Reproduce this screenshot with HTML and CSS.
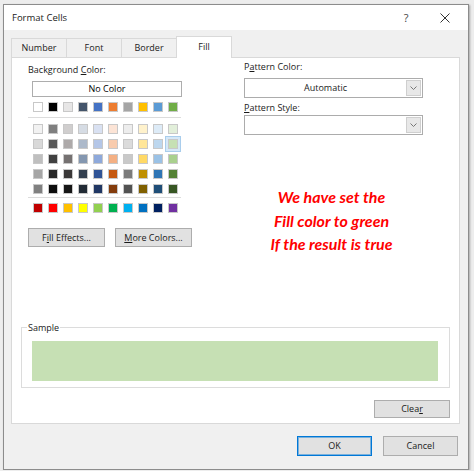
FILE: index.html
```html
<!DOCTYPE html>
<html>
<head>
<meta charset="utf-8">
<link rel="stylesheet" href="styles.css">
</head>
<body>
<div class="dialog">
  <div class="titlebar">
    <span class="title">Format Cells</span>
    <span class="help">?</span>
    <svg class="close" width="10" height="10" viewBox="0 0 10 10"><path d="M0.5 0.5L9.5 9.5M9.5 0.5L0.5 9.5" stroke="#333" stroke-width="1" fill="none"/></svg>
  </div>
  <div class="body">
    <div class="tabs">
      <div class="tab">Number</div>
      <div class="tab">Font</div>
      <div class="tab">Border</div>
      <div class="tab active">Fill</div>
    </div>
    <div class="panel">
      <div class="top">
        <div class="left">
          <div class="label">Background <u>C</u>olor:</div>
          <div class="nocolor">No Color</div>
          <div class="swatches">
            <span class="sw" style="background:#FFFFFF"></span><span class="sw" style="background:#000000"></span><span class="sw" style="background:#E7E6E6"></span><span class="sw" style="background:#44546A"></span><span class="sw" style="background:#4472C4"></span><span class="sw" style="background:#ED7D31"></span><span class="sw" style="background:#A5A5A5"></span><span class="sw" style="background:#FFC000"></span><span class="sw" style="background:#5B9BD5"></span><span class="sw" style="background:#70AD47"></span>
          </div>
          <div class="sep"></div>
          <div class="swatches grid">
            <span class="sw" style="background:#F2F2F2"></span><span class="sw" style="background:#7F7F7F"></span><span class="sw" style="background:#D0CECE"></span><span class="sw" style="background:#D6DCE4"></span><span class="sw" style="background:#D9E1F2"></span><span class="sw" style="background:#FCE4D6"></span><span class="sw" style="background:#EDEDED"></span><span class="sw" style="background:#FFF2CC"></span><span class="sw" style="background:#DDEBF7"></span><span class="sw" style="background:#E2EFDA"></span>
            <span class="sw" style="background:#D9D9D9"></span><span class="sw" style="background:#595959"></span><span class="sw" style="background:#AEAAAA"></span><span class="sw" style="background:#ACB9CA"></span><span class="sw" style="background:#B4C6E7"></span><span class="sw" style="background:#F8CBAD"></span><span class="sw" style="background:#DBDBDB"></span><span class="sw" style="background:#FFE699"></span><span class="sw" style="background:#BDD7EE"></span><span class="sw sel" style="background:#C6E0B4"></span>
            <span class="sw" style="background:#BFBFBF"></span><span class="sw" style="background:#404040"></span><span class="sw" style="background:#757171"></span><span class="sw" style="background:#8497B0"></span><span class="sw" style="background:#8EA9DB"></span><span class="sw" style="background:#F4B084"></span><span class="sw" style="background:#C9C9C9"></span><span class="sw" style="background:#FFD966"></span><span class="sw" style="background:#9BC2E6"></span><span class="sw" style="background:#A9D08E"></span>
            <span class="sw" style="background:#A6A6A6"></span><span class="sw" style="background:#262626"></span><span class="sw" style="background:#3A3838"></span><span class="sw" style="background:#333F4F"></span><span class="sw" style="background:#305496"></span><span class="sw" style="background:#C65911"></span><span class="sw" style="background:#7B7B7B"></span><span class="sw" style="background:#BF8F00"></span><span class="sw" style="background:#2F75B5"></span><span class="sw" style="background:#548235"></span>
            <span class="sw" style="background:#808080"></span><span class="sw" style="background:#0D0D0D"></span><span class="sw" style="background:#161616"></span><span class="sw" style="background:#222B35"></span><span class="sw" style="background:#203764"></span><span class="sw" style="background:#833C0C"></span><span class="sw" style="background:#525252"></span><span class="sw" style="background:#806000"></span><span class="sw" style="background:#1F4E78"></span><span class="sw" style="background:#375623"></span>
          </div>
          <div class="sep sep2"></div>
          <div class="swatches">
            <span class="sw" style="background:#C00000"></span><span class="sw" style="background:#FF0000"></span><span class="sw" style="background:#FFC000"></span><span class="sw" style="background:#FFFF00"></span><span class="sw" style="background:#92D050"></span><span class="sw" style="background:#00B050"></span><span class="sw" style="background:#00B0F0"></span><span class="sw" style="background:#0070C0"></span><span class="sw" style="background:#002060"></span><span class="sw" style="background:#7030A0"></span>
          </div>
          <div class="btnrow">
            <button class="btn wide">F<u>i</u>ll Effects...</button>
            <button class="btn wide"><u>M</u>ore Colors...</button>
          </div>
        </div>
        <div class="right">
          <div class="label">P<u>a</u>ttern Color:</div>
          <div class="select first">
            <span class="select-text">Automatic</span>
            <span class="select-btn"><svg width="7" height="4" viewBox="0 0 7 4"><path d="M0.5 0.5L3.5 3.5L6.5 0.5" fill="none" stroke="#777" stroke-width="1"/></svg></span>
          </div>
          <div class="label label2"><u>P</u>attern Style:</div>
          <div class="select">
            <span class="select-text"></span>
            <span class="select-btn"><svg width="7" height="4" viewBox="0 0 7 4"><path d="M0.5 0.5L3.5 3.5L6.5 0.5" fill="none" stroke="#777" stroke-width="1"/></svg></span>
          </div>
          <div class="note">We have set the<br>Fill color to green<br>If the result is true</div>
        </div>
      </div>
      <div class="sample">
        <div class="sample-label">Sample</div>
        <div class="sample-fill"></div>
      </div>
      <div class="clearrow">
        <button class="btn clear">Clea<u>r</u></button>
      </div>
    </div>
    <div class="footer">
      <button class="btn foot ok">OK</button>
      <button class="btn foot">Cancel</button>
    </div>
  </div>
</div>
</body>
</html>
```
FILE: styles.css
```css
html, body {
  margin: 0;
  padding: 0;
}
body {
  background: #ededed;
  padding: 4px 0 0 3px;
  font-family: "Open Sans", "Noto Sans", sans-serif;
  font-size: 9px;
  color: #000;
}
.dialog {
  width: 466px;
  height: 466px;
  box-sizing: border-box;
  border: 1px solid #8c8c8c;
  box-shadow: 1px 1px 2px rgba(0,0,0,0.3);
  display: flex;
  flex-direction: column;
  background: #f0f0f0;
}
.titlebar {
  height: 25px;
  flex: none;
  background: #fff;
  display: flex;
  align-items: center;
  padding-left: 8px;
}
.title {
  font-size: 9.5px;
  color: #1a1a1a;
}
.help {
  margin-left: auto;
  width: 10px;
  text-align: center;
  font-size: 11px;
  color: #444;
}
.close {
  margin-left: 29px;
  margin-right: 18px;
  display: block;
}
.body {
  flex: 1;
  padding: 6px 0 0 7px;
  display: flex;
  flex-direction: column;
}
.tabs {
  display: flex;
  align-items: flex-end;
  height: 21px;
}
.tab {
  width: 56px;
  height: 19px;
  box-sizing: border-box;
  border: 1px solid #d9d9d9;
  border-bottom: 0;
  margin-right: -1px;
  text-align: center;
  line-height: 18px;
  background: #f0f0f0;
  color: #222;
}
.tab.active {
  height: 22px;
  margin-bottom: -1px;
  background: #fff;
  position: relative;
  z-index: 1;
  line-height: 19px;
}
.panel {
  width: 449px;
  height: 367px;
  box-sizing: border-box;
  border: 1px solid #d9d9d9;
  background: #fff;
  display: flex;
  flex-direction: column;
}
.top {
  height: 269px;
  flex: none;
  display: flex;
}
.left {
  width: 232px;
  box-sizing: border-box;
  padding: 5px 0 0 16px;
}
.label {
  line-height: 14px;
  height: 14px;
  color: #1a1a1a;
}
.nocolor {
  margin: 4px 0 0 4px;
  width: 150px;
  height: 16px;
  box-sizing: border-box;
  border: 1px solid #adadad;
  text-align: center;
  line-height: 14px;
}
.swatches {
  display: grid;
  grid-template-columns: repeat(10, 10px);
  grid-auto-rows: 10px;
  column-gap: 5px;
  row-gap: 5px;
  margin: 5px 0 0 5px;
}
.swatches.grid {
  margin-top: 6px;
}
.sw {
  display: block;
  width: 10px;
  height: 10px;
  box-sizing: border-box;
  border: 1px solid #c8c8c8;
}
.sw.sel {
  box-shadow: 0 0 0 2px #d5e8f7, 0 0 0 3px #a9cdec;
}
.sep {
  height: 1px;
  width: 153px;
  background: #dcdcdc;
  margin-top: 5px;
}
.sep.sep2 {
  margin-top: 3px;
}
.btnrow {
  display: flex;
  gap: 10px;
  margin-top: 15px;
}
.btn {
  font-family: inherit;
  font-size: 9px;
  color: #1a1a1a;
  background: #e1e1e1;
  border: 1px solid #adadad;
  padding: 0;
  margin: 0;
  box-sizing: border-box;
  line-height: 14px;
}
.btn.wide {
  width: 77px;
  height: 19px;
}
.right {
  width: 179px;
  padding-top: 2px;
}
.select {
  height: 20px;
  box-sizing: border-box;
  border: 1px solid #acacac;
  display: flex;
  margin-top: 4px;
}
.label2 {
  margin-top: 3px;
}
.label2 + .select {
  margin-top: 0;
}
.select-text {
  flex: 1;
  text-align: center;
  line-height: 18px;
  color: #1a1a1a;
}
.select-btn {
  width: 15px;
  margin: 1px 1px 1px 0;
  box-sizing: border-box;
  border: 1px solid #cfcfcf;
  background: #e8e8e8;
  display: flex;
  align-items: center;
  justify-content: center;
}
.note {
  margin-top: 50px;
  padding-right: 4px;
  text-align: center;
  font-family: "Lato", "Open Sans", sans-serif;
  font-weight: bold;
  font-style: italic;
  font-size: 16px;
  line-height: 23.5px;
  color: #f00;
}
.sample {
  margin-left: 9px;
  width: 429px;
  height: 61px;
  flex: none;
  box-sizing: border-box;
  border: 1px solid #dcdcdc;
}
.sample-label {
  width: fit-content;
  background: #fff;
  margin: -7px 0 0 5px;
  padding: 0 1px;
  line-height: 14px;
  height: 14px;
  color: #1a1a1a;
}
.sample-fill {
  margin: 6px 0 0 10px;
  width: 406px;
  height: 40px;
  background: #c6e0b4;
}
.clearrow {
  display: flex;
  justify-content: flex-end;
  padding-right: 9px;
  margin-top: 12px;
}
.btn.clear {
  width: 76px;
  height: 18px;
}
.footer {
  display: flex;
  justify-content: flex-end;
  gap: 11px;
  padding-right: 10px;
  margin-top: 12px;
}
.btn.foot {
  width: 75px;
  height: 20px;
}
.btn.ok {
  border-color: #0078d7;
  box-shadow: inset 0 0 0 1px rgba(0,120,215,0.45);
}
```
